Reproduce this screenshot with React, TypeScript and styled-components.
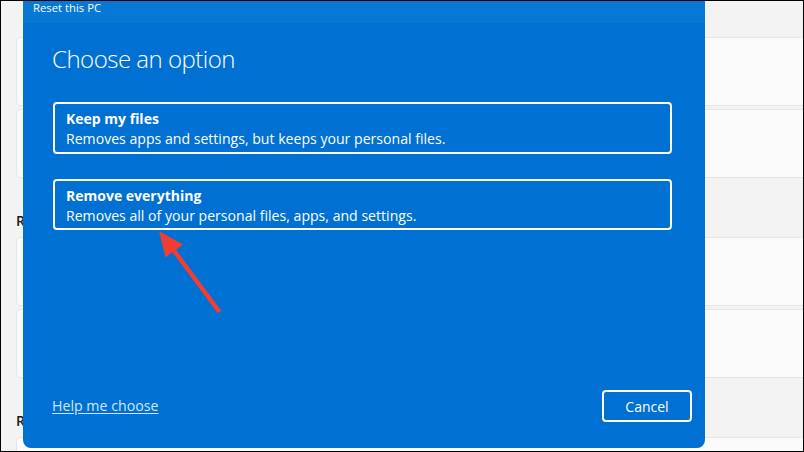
import React from "react";
import styled, { createGlobalStyle } from "styled-components";

const GlobalStyle = createGlobalStyle`
  html, body {
    margin: 0;
    padding: 0;
    background: #ffffff;
  }
  body {
    font-family: "Open Sans", "Segoe UI", "Noto Sans", sans-serif;
    -webkit-font-smoothing: antialiased;
  }
`;

const Frame = styled.div`
  position: relative;
  width: 804px;
  height: 452px;
  box-sizing: border-box;
  border: 1px solid #000000;
  overflow: hidden;
  background: #f3f3f3;
`;

/* Settings page that sits behind the modal */
const SettingsPage = styled.div`
  display: flex;
  flex-direction: column;
  width: 1000px;
  padding: 36px 0 0 15px;
`;

const CardGroup = styled.div`
  display: flex;
  flex-direction: column;
  gap: 3px;
`;

const Card = styled.div`
  height: 69px;
  box-sizing: border-box;
  border: 1px solid #e5e5e5;
  border-radius: 4px;
  background: #fbfbfb;
`;

const SectionHeading = styled.h3`
  margin: 0;
  height: 59px;
  box-sizing: border-box;
  display: flex;
  align-items: flex-end;
  padding-bottom: 6px;
  font-size: 14px;
  line-height: 20px;
  font-weight: 600;
  color: #1b1b1b;
`;

/* Modal dialog */
const Dialog = styled.section`
  position: absolute;
  left: 22px;
  top: 0;
  width: 682px;
  height: 447px;
  display: flex;
  flex-direction: column;
  background: #0070d3;
  border-radius: 0 0 8px 8px;
  overflow: hidden;
  color: #ffffff;
`;

const TitleBar = styled.header`
  height: 22px;
  flex: none;
  box-sizing: border-box;
  padding-left: 10px;
  background: #0778d4;
  font-size: 11.3px;
  line-height: 14px;
  color: #ffffff;
`;

const DialogBody = styled.div`
  flex: 1;
  display: flex;
  flex-direction: column;
  padding: 20px 13px 26px 29px;
`;

const Heading = styled.h1`
  margin: 0;
  font-size: 24px;
  line-height: 32px;
  font-weight: 300;
  letter-spacing: -0.5px;
`;

const OptionList = styled.div`
  display: flex;
  flex-direction: column;
  gap: 25px;
  margin: 27px 20px 0 1px;
`;

const Option = styled.div<{ $tight?: boolean }>`
  box-sizing: border-box;
  border: 2px solid #ffffff;
  border-radius: 4px;
  padding: ${(p) => (p.$tight ? "5px 11px 2px" : "5px 11px 3px")};
  cursor: pointer;
`;

const OptionTitle = styled.div`
  font-size: 14px;
  line-height: 20px;
  font-weight: 700;
`;

const OptionText = styled.div`
  font-size: 14.1px;
  line-height: 20px;
  font-weight: 400;
`;

const Footer = styled.footer`
  margin-top: auto;
  display: flex;
  align-items: center;
  justify-content: space-between;
`;

const HelpLink = styled.a`
  font-size: 14.2px;
  line-height: 20px;
  color: #d2e7fb;
  text-decoration: underline;
  text-underline-offset: 2px;
  cursor: pointer;
`;

const CancelButton = styled.button`
  width: 90px;
  height: 32px;
  box-sizing: border-box;
  border: 2px solid #ffffff;
  border-radius: 4px;
  background: transparent;
  color: #ffffff;
  font-family: inherit;
  font-size: 14px;
  padding: 0;
  cursor: pointer;
`;

/* Red call-out arrow drawn over the dialog */
const Annotation = styled.svg`
  position: absolute;
  left: 149px;
  top: 222px;
  width: 80px;
  height: 95px;
  pointer-events: none;
`;

const ArrowMark = () => (
  <Annotation viewBox="0 0 80 95">
    <line x1="69.5" y1="89" x2="22" y2="25" stroke="#ef3e33" strokeWidth="4.5" />
    <polygon points="9,8 15.5,34.5 33,21.5" fill="#ef3e33" />
  </Annotation>
);

export default function App() {
  return (
    <>
      <GlobalStyle />
      <Frame>
        <SettingsPage>
          <CardGroup>
            <Card />
            <Card />
          </CardGroup>
          <SectionHeading>Recovery options</SectionHeading>
          <CardGroup>
            <Card />
            <Card />
          </CardGroup>
          <SectionHeading>Related support</SectionHeading>
          <CardGroup>
            <Card />
          </CardGroup>
        </SettingsPage>

        <Dialog>
          <TitleBar>Reset this PC</TitleBar>
          <DialogBody>
            <Heading>Choose an option</Heading>
            <OptionList>
              <Option>
                <OptionTitle>Keep my files</OptionTitle>
                <OptionText>Removes apps and settings, but keeps your personal files.</OptionText>
              </Option>
              <Option $tight>
                <OptionTitle>Remove everything</OptionTitle>
                <OptionText>Removes all of your personal files, apps, and settings.</OptionText>
              </Option>
            </OptionList>
            <Footer>
              <HelpLink>Help me choose</HelpLink>
              <CancelButton>Cancel</CancelButton>
            </Footer>
          </DialogBody>
        </Dialog>

        <ArrowMark />
      </Frame>
    </>
  );
}
